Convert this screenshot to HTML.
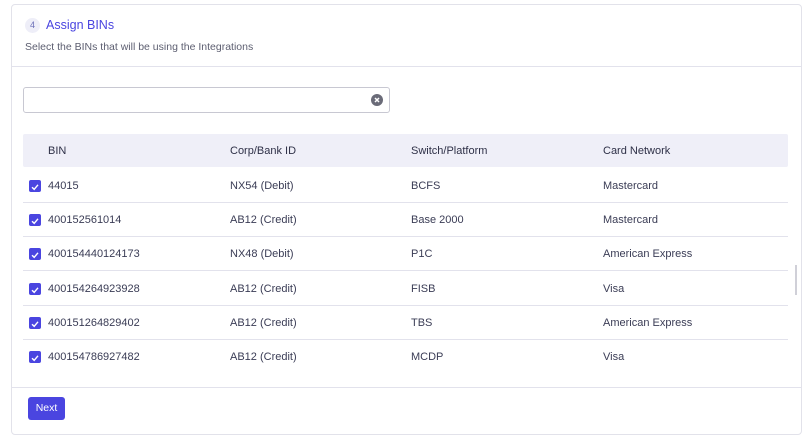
<!DOCTYPE html>
<html><head><style>
*{box-sizing:border-box;margin:0;padding:0}
body{width:812px;height:438px;background:#fff;font-family:"Liberation Sans",sans-serif;position:relative;overflow:hidden;color:#2e3047}
.card{position:absolute;left:11px;top:4px;width:791px;height:431px;border:1px solid #e2e2ea;border-radius:4px}
.abs{position:absolute}
.t{position:absolute;font-size:11px;color:#3a3c55;white-space:nowrap}
.cb{position:absolute;left:29px;width:12px;height:12px;background:#4a45e0;border-radius:2px}
.line{position:absolute;left:23px;width:765px;height:1px;background:#e2e2ec}
</style></head><body>
<div class="card"></div>
<div class="abs" style="left:25px;top:18px;width:15px;height:15px;border-radius:50%;background:#eeeef8;color:#6d70b8;font-size:9px;text-align:center;line-height:15px">4</div>
<div class="t" style="left:46px;top:18px;font-size:12.5px;color:#4a45e0">Assign BINs</div>
<div class="t" style="left:25px;top:41px;font-size:10.5px;color:#5c5e70">Select the BINs that will be using the Integrations</div>
<div class="abs" style="left:12px;top:66px;width:789px;height:1px;background:#e2e2ec"></div>
<div class="abs" style="left:23px;top:87px;width:367px;height:26px;border:1px solid #c8c8d2;border-radius:3px"></div>
<svg class="abs" style="left:371px;top:94px" width="12" height="12" viewBox="0 0 12 12"><circle cx="6" cy="6" r="6" fill="#6a6b78"/><path d="M4 4L8 8M8 4L4 8" stroke="#fff" stroke-width="1.5"/></svg>
<div class="abs" style="left:23px;top:134px;width:765px;height:33px;background:#efeff8;border-radius:2px"></div>
<div class="t" style="left:48px;top:145px;color:#2e3047">BIN</div>
<div class="t" style="left:230px;top:145px;color:#2e3047">Corp/Bank ID</div>
<div class="t" style="left:411px;top:145px;color:#2e3047">Switch/Platform</div>
<div class="t" style="left:603px;top:145px;color:#2e3047">Card Network</div>
<div class="abs" style="left:795px;top:265px;width:2px;height:30px;background:#d0d0d8"></div>
<div id="rows"></div>
<script>
var r=[["44015","NX54 (Debit)","BCFS","Mastercard"],["400152561014","AB12 (Credit)","Base 2000","Mastercard"],["400154440124173","NX48 (Debit)","P1C","American Express"],["400154264923928","AB12 (Credit)","FISB","Visa"],["400151264829402","AB12 (Credit)","TBS","American Express"],["400154786927482","AB12 (Credit)","MCDP","Visa"]];
var h="";r.forEach(function(x,i){var y=180+i*34.2;
h+='<div class="cb" style="top:'+(y)+'px"><svg width="12" height="12"><path d="M3 6.2L5.2 8.3L9 3.8" stroke="#fff" stroke-width="1.4" fill="none"/></svg></div>';
h+='<div class="t" style="left:48px;top:'+y+'px">'+x[0]+'</div><div class="t" style="left:230px;top:'+y+'px">'+x[1]+'</div><div class="t" style="left:411px;top:'+y+'px">'+x[2]+'</div><div class="t" style="left:603px;top:'+y+'px">'+x[3]+'</div>';
if(i<5)h+='<div class="line" style="top:'+(y+22)+'px"></div>';});
document.getElementById("rows").innerHTML=h;
</script>
<div class="abs" style="left:12px;top:387px;width:789px;height:1px;background:#e2e2ec"></div>
<div class="abs" style="left:28px;top:397px;width:37px;height:23px;background:#4a45e0;border-radius:3px;color:#fff;font-size:10.5px;text-align:center;line-height:23px">Next</div>
</body></html>
